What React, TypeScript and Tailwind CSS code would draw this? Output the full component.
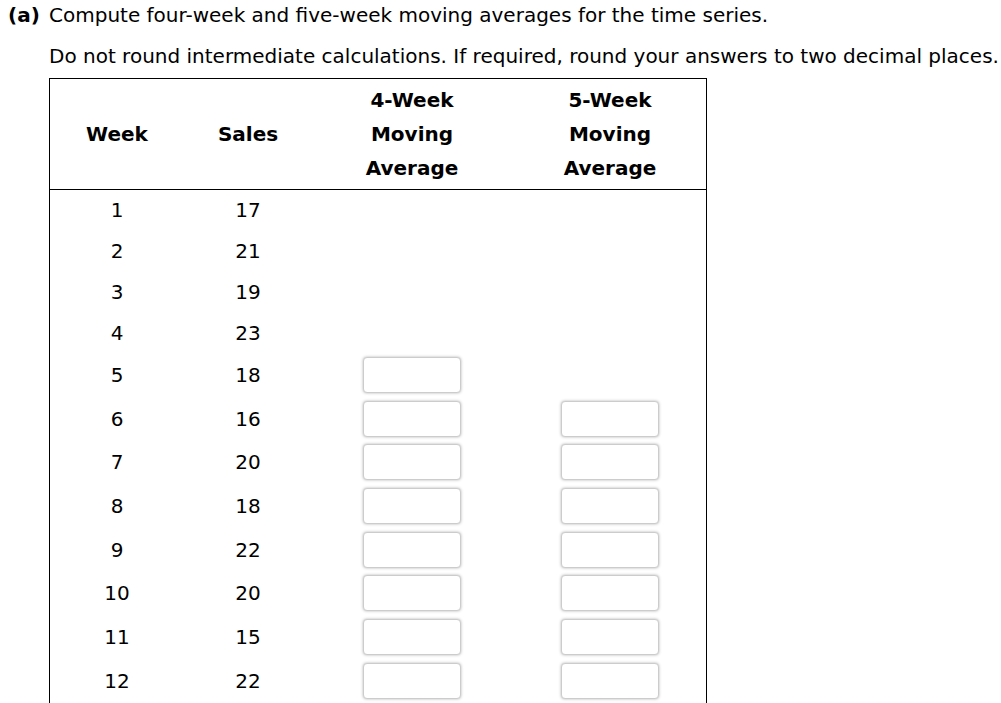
import React from "react";

const rows: { week: number; sales: number; four: boolean; five: boolean }[] = [
  { week: 1, sales: 17, four: false, five: false },
  { week: 2, sales: 21, four: false, five: false },
  { week: 3, sales: 19, four: false, five: false },
  { week: 4, sales: 23, four: false, five: false },
  { week: 5, sales: 18, four: true, five: false },
  { week: 6, sales: 16, four: true, five: true },
  { week: 7, sales: 20, four: true, five: true },
  { week: 8, sales: 18, four: true, five: true },
  { week: 9, sales: 22, four: true, five: true },
  { week: 10, sales: 20, four: true, five: true },
  { week: 11, sales: 15, four: true, five: true },
  { week: 12, sales: 22, four: true, five: true },
];

const cols = "grid grid-cols-[134px_128px_200px_196px] items-center";

const AnswerBox: React.FC = () => (
  <input
    type="text"
    className="h-9 w-[98px] rounded-[4px] border border-[#cccccc] bg-white shadow-[0_0_3px_rgba(0,0,0,0.3)] outline-none"
  />
);

export default function App() {
  return (
    <div className="min-h-[703px] bg-white pt-[3px] pl-2 text-[20px] leading-6 text-black font-['Verdana','DejaVu_Sans',sans-serif]">
      <div className="flex">
        <span className="w-[41px] font-bold">(a)</span>
        <span>Compute four-week and five-week moving averages for the time series.</span>
      </div>
      <div className="pl-[41px]">
        <p className="mt-[17px]">
          Do not round intermediate calculations. If required, round your answers to two decimal places.
        </p>
        <div className="mt-[10px] w-[658px] border-x border-t border-black">
          <div className={`${cols} h-[111px] border-b border-black text-center font-bold leading-[34px]`}>
            <div>Week</div>
            <div>Sales</div>
            <div>
              4-Week
              <br />
              Moving
              <br />
              Average
            </div>
            <div>
              5-Week
              <br />
              Moving
              <br />
              Average
            </div>
          </div>
          {rows.map((r) => (
            <div
              key={r.week}
              className={`${cols} text-center ${r.four ? "h-[43.7px]" : "h-[40.8px]"}`}
            >
              <div>{r.week}</div>
              <div>{r.sales}</div>
              <div className="flex justify-center">{r.four && <AnswerBox />}</div>
              <div className="flex justify-center">{r.five && <AnswerBox />}</div>
            </div>
          ))}
        </div>
      </div>
    </div>
  );
}
